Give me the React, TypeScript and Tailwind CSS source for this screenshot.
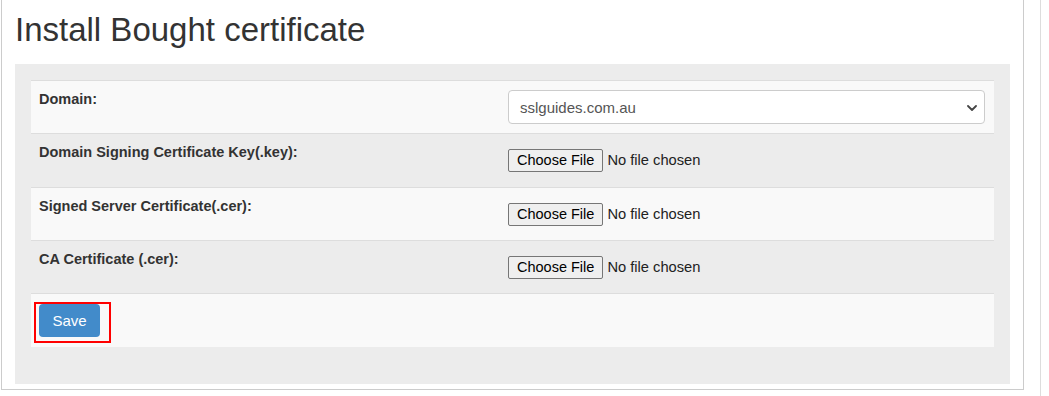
import React from "react";

function FileInput() {
  return (
    <div className="flex items-center">
      <span className="h-[23px] px-[8px] flex items-center border border-[#767676] bg-[#efefef] rounded-[2px] text-[14.5px] text-black leading-none">
        Choose File
      </span>
      <span className="ml-[4px] text-[14.7px] text-[#222] leading-none">No file chosen</span>
    </div>
  );
}

function Row({
  label,
  striped,
  h,
  children,
  center,
}: {
  label: string;
  striped: boolean;
  h: string;
  children: React.ReactNode;
  center?: boolean;
}) {
  return (
    <div className={`grid grid-cols-[468px_1fr] border-t border-[#dddddd] ${h} ${striped ? "bg-[#f9f9f9]" : ""}`}>
      <div className="pl-2 pt-2 text-[14.5px] font-bold leading-[21px] text-[#333]">{label}</div>
      <div className={`pl-[9px] pr-[9px] ${center ? "flex items-center" : "pt-[9px]"}`}>{children}</div>
    </div>
  );
}

export default function App() {
  return (
    <div className="w-[1049px] h-[396px] bg-white flex overflow-hidden font-['Liberation_Sans',Arial,sans-serif] text-[#333]">
      <div className="ml-px w-[1023px] self-start border-x border-b border-[#cccccc] px-[13px] pb-[5px] flex flex-col">
        <h1 className="mt-[12px] mb-[16px] text-[33px] leading-[36px] font-normal text-[#333]">
          Install Bought certificate
        </h1>
        <div className="bg-[#ececec] px-4 pt-4 pb-[37px]">
          <div className="flex flex-col">
            <Row label="Domain:" striped h="h-[53px]">
              <div className="relative h-[34px] w-full bg-white border border-[#cccccc] rounded-[4px] flex items-center pl-[11px]">
                <span className="text-[15px] text-[#555] leading-none">sslguides.com.au</span>
                <svg
                  className="absolute right-[7px] top-[14px]"
                  width="10"
                  height="6"
                  viewBox="0 0 10 6"
                  fill="none"
                >
                  <path d="M1 1l4 4 4-4" stroke="#444" strokeWidth="1.8" strokeLinecap="round" strokeLinejoin="round" />
                </svg>
              </div>
            </Row>
            <Row label="Domain Signing Certificate Key(.key):" striped={false} h="h-[54px]" center>
              <FileInput />
            </Row>
            <Row label="Signed Server Certificate(.cer):" striped h="h-[53px]" center>
              <FileInput />
            </Row>
            <Row label="CA Certificate (.cer):" striped={false} h="h-[53px]" center>
              <FileInput />
            </Row>
            <div className="border-t border-[#dddddd] h-[54px] bg-[#f9f9f9] pl-2 pt-[10px]">
              <div className="relative inline-block">
                <button className="w-[61px] h-[33px] rounded-[4px] bg-[#428bca] text-white text-[15px] leading-none flex items-center justify-center">
                  Save
                </button>
                <div className="absolute left-[-5px] top-[-2px] w-[77px] h-[41px] border-2 border-[#ff0000]" />
              </div>
            </div>
          </div>
        </div>
      </div>
      <div className="ml-4 w-px h-full bg-[#dddddd]" />
    </div>
  );
}
